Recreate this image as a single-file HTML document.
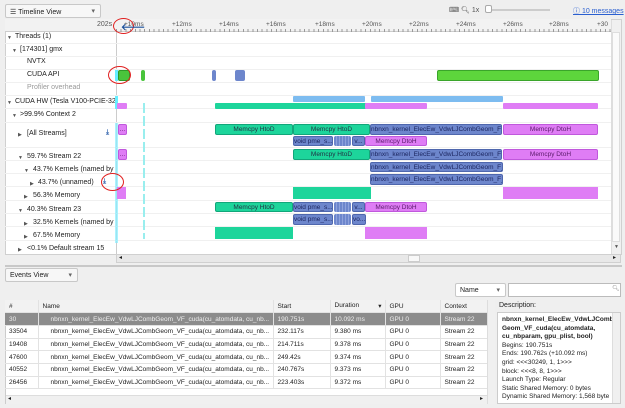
<!DOCTYPE html>
<html><head><meta charset="utf-8"><style>
*{margin:0;padding:0;box-sizing:border-box}
body{width:625px;height:408px;background:#efefef;font-family:"Liberation Sans",sans-serif;font-size:7px;color:#222;position:relative;overflow:hidden}
.a{position:absolute}
.dd{position:absolute;background:#f7f7f7;border:1px solid #c8c8c8;border-radius:2px;font-size:7px;padding:3px 4px}
.dd:after{content:"▾";position:absolute;right:5px;top:2px;color:#666;font-size:7px}
.lbl{position:absolute;font-size:7px;white-space:nowrap;color:#222}
.tri{position:absolute;font-size:5px;color:#555}
.b{position:absolute;border-radius:2px;font-size:6.5px;text-align:center;line-height:10px;white-space:nowrap;overflow:hidden;color:#234}
.g{background:#1dd59b;border:1px solid #12a67a}
.bl{background:#6d86cc;border:1px solid #4f67ad;color:#1c2660}
.p{background:#df7df5;border:1px solid #c058dc;color:#5a1a6a}
.st{background:repeating-linear-gradient(90deg,#6d86cc 0 2px,#8ea2dc 2px 3px)}
.row{position:absolute;left:5px;width:606px;height:1px;background:#f0f0f0}
.tk{position:absolute;top:21px;font-size:6.5px;color:#555}
table{border-collapse:collapse}
td{height:12.7px;font-size:6.5px;padding-left:4px;border-bottom:1px solid #e2e2e2;border-right:1px solid #e2e2e2;white-space:nowrap;overflow:hidden}
</style></head><body>
<div class="dd" style="left:5px;top:4px;width:96px;height:14px">☰ Timeline View</div>
<div class="a" style="left:449px;top:6px;font-size:7px;color:#555">⌨ 🔍︎ 1x</div>
<div class="a" style="left:485px;top:9px;width:65px;height:2px;background:#ccc"></div>
<div class="a" style="left:485px;top:5px;width:7px;height:8px;background:#fff;border:1px solid #aaa;border-radius:2px"></div>
<div class="a" style="left:573px;top:6px;font-size:7px;color:#2a5fd0;text-decoration:underline">ⓘ 10 messages</div>

<div class="a" style="left:5px;top:19px;width:617px;height:236px;background:#fff;border:1px solid #d0d0d0"></div>
<div class="a" style="left:5px;top:19px;width:606px;height:13px;background:#f2f2f2;border-bottom:1px solid #ccc"></div>
<div class="a" style="left:116px;top:29px;width:495px;height:3px;background:repeating-linear-gradient(90deg,#999 0 1px,transparent 1px 4.7px)"></div>
<div class="lbl" style="left:97px;top:21px;color:#555">202s</div>
<div class="tk" style="left:124px">+10ms</div><div class="tk" style="left:172px">+12ms</div><div class="tk" style="left:219px">+14ms</div><div class="tk" style="left:266px">+16ms</div><div class="tk" style="left:315px">+18ms</div><div class="tk" style="left:362px">+20ms</div><div class="tk" style="left:409px">+22ms</div><div class="tk" style="left:456px">+24ms</div><div class="tk" style="left:503px">+26ms</div><div class="tk" style="left:549px">+28ms</div><div class="tk" style="left:597px">+30</div>
<div class="a" style="left:116px;top:32px;width:1px;height:222px;background:#ccc"></div>
<div class="a" style="left:611px;top:20px;width:10px;height:234px;background:#f0f0f0;border-left:1px solid #ddd"></div>
<div class="a" style="left:612px;top:32px;width:8px;height:210px;background:#fafafa;border:1px solid #ddd"></div>
<div class="a" style="left:614px;top:244px;font-size:5px;color:#555">▼</div>
<div class="a" style="left:116px;top:254px;width:505px;height:9px;background:#e8e8e8;border:1px solid #d0d0d0"></div>
<div class="a" style="left:408px;top:255px;width:12px;height:7px;background:#f8f8f8;border:1px solid #ccc"></div>
<div class="a" style="left:119px;top:254px;font-size:6px">◂</div><div class="a" style="left:613px;top:254px;font-size:6px">▸</div>

<div class="row" style="top:43px"></div><div class="row" style="top:56px"></div><div class="row" style="top:69px"></div><div class="row" style="top:82px"></div><div class="row" style="top:95px"></div><div class="row" style="top:108px"></div><div class="row" style="top:122px"></div><div class="row" style="top:147px"></div><div class="row" style="top:160px"></div><div class="row" style="top:173px"></div><div class="row" style="top:186px"></div><div class="row" style="top:200px"></div><div class="row" style="top:213px"></div><div class="row" style="top:226px"></div><div class="row" style="top:240px"></div>

<div class="a" style="left:0;top:0;width:116px;height:255px;overflow:hidden">
<div class="tri" style="left:7px;top:35px">▼</div><div class="lbl" style="left:15px;top:33px">Threads (1)</div>
<div class="tri" style="left:12px;top:48px">▼</div><div class="lbl" style="left:20px;top:46px">[174301] gmx</div>
<div class="lbl" style="left:27px;top:58px">NVTX</div>
<div class="lbl" style="left:27px;top:71px">CUDA API</div>
<div class="lbl" style="left:27px;top:84px;color:#999">Profiler overhead</div>
<div class="tri" style="left:7px;top:100px">▼</div><div class="lbl" style="left:15px;top:98px">CUDA HW (Tesla V100-PCIE-32GE</div>
<div class="tri" style="left:12px;top:113px">▼</div><div class="lbl" style="left:20px;top:111px">&gt;99.9% Context 2</div>
<div class="tri" style="left:18px;top:132px">▶</div><div class="lbl" style="left:27px;top:130px">[All Streams]</div><div class="lbl" style="left:106px;top:129px;color:#3a6ab0;font-weight:bold">⤓</div>
<div class="tri" style="left:18px;top:155px">▼</div><div class="lbl" style="left:27px;top:153px">59.7% Stream 22</div>
<div class="tri" style="left:24px;top:168px">▼</div><div class="lbl" style="left:33px;top:166px">43.7% Kernels (named by N</div>
<div class="tri" style="left:30px;top:181px">▶</div><div class="lbl" style="left:38px;top:179px">43.7% (unnamed)</div><div class="lbl" style="left:103px;top:178px;color:#3a6ab0;font-weight:bold">⤓</div>
<div class="tri" style="left:24px;top:194px">▶</div><div class="lbl" style="left:33px;top:192px">56.3% Memory</div>
<div class="tri" style="left:18px;top:208px">▼</div><div class="lbl" style="left:27px;top:206px">40.3% Stream 23</div>
<div class="tri" style="left:24px;top:221px">▶</div><div class="lbl" style="left:33px;top:219px">32.5% Kernels (named by NV</div>
<div class="tri" style="left:24px;top:234px">▶</div><div class="lbl" style="left:33px;top:232px">67.5% Memory</div>
<div class="tri" style="left:18px;top:247px">▶</div><div class="lbl" style="left:27px;top:245px">&lt;0.1% Default stream 15</div>
</div>

<div class="a" style="left:115px;top:70px;width:3px;height:11px;background:#6ef"></div>
<div class="a" style="left:115px;top:96px;width:3px;height:13px;background:#6ef"></div>
<div class="a" style="left:115px;top:123px;width:3px;height:120px;background:#8ef;opacity:.7"></div>
<div class="a" style="left:143px;top:103px;width:2px;height:136px;background:repeating-linear-gradient(#9ee 0 10px,transparent 10px 13px)"></div>

<div class="b" style="left:118px;top:70px;width:12px;height:11px;background:#49c43c;border:1px solid #2f9a28"></div>
<div class="b" style="left:141px;top:70px;width:4px;height:11px;background:#49c43c"></div>
<div class="b" style="left:212px;top:70px;width:4px;height:11px;background:#6d86cc"></div>
<div class="b" style="left:235px;top:70px;width:10px;height:11px;background:#6d86cc"></div>
<div class="b" style="left:437px;top:70px;width:162px;height:11px;background:#5dd53c;border:1px solid #3aa52a"></div>
<div class="b" style="left:293px;top:96px;width:72px;height:6px;background:#7dbcf0;border-radius:1px"></div>
<div class="b" style="left:371px;top:96px;width:132px;height:6px;background:#7dbcf0;border-radius:1px"></div>
<div class="b" style="left:215px;top:103px;width:155px;height:6px;background:#1dd59b;border-radius:1px"></div>
<div class="b" style="left:117px;top:103px;width:10px;height:6px;background:#df7df5;border-radius:1px"></div>
<div class="b" style="left:365px;top:103px;width:62px;height:6px;background:#df7df5;border-radius:1px"></div>
<div class="b" style="left:503px;top:103px;width:95px;height:6px;background:#df7df5;border-radius:1px"></div>
<div class="b p" style="left:118px;top:124px;width:9px;height:11px">...</div>
<div class="b g" style="left:215px;top:124px;width:78px;height:11px">Memcpy HtoD</div>
<div class="b g" style="left:293px;top:124px;width:77px;height:11px">Memcpy HtoD</div>
<div class="b bl" style="left:370px;top:124px;width:132px;height:11px">nbnxn_kernel_ElecEw_VdwLJCombGeom_F_...</div>
<div class="b p" style="left:503px;top:124px;width:95px;height:11px">Memcpy DtoH</div>
<div class="b bl" style="left:293px;top:136px;width:40px;height:10px">void pme_s...</div>
<div class="b st" style="left:334px;top:136px;width:17px;height:10px"></div>
<div class="b bl" style="left:352px;top:136px;width:13px;height:10px">v...</div>
<div class="b p" style="left:365px;top:136px;width:62px;height:10px">Memcpy DtoH</div>
<div class="b p" style="left:118px;top:149px;width:9px;height:11px">...</div>
<div class="b g" style="left:293px;top:149px;width:77px;height:11px">Memcpy HtoD</div>
<div class="b bl" style="left:370px;top:149px;width:132px;height:11px">nbnxn_kernel_ElecEw_VdwLJCombGeom_F_...</div>
<div class="b p" style="left:503px;top:149px;width:95px;height:11px">Memcpy DtoH</div>
<div class="b bl" style="left:370px;top:162px;width:133px;height:10px">nbnxn_kernel_ElecEw_VdwLJCombGeom_F_...</div>
<div class="b bl" style="left:370px;top:174px;width:133px;height:11px">nbnxn_kernel_ElecEw_VdwLJCombGeom_F_...</div>
<div class="b" style="left:117px;top:187px;width:9px;height:12px;background:#df7df5;border-radius:0"></div>
<div class="b" style="left:293px;top:187px;width:78px;height:12px;background:#1dd59b;border-radius:0"></div>
<div class="b" style="left:503px;top:187px;width:95px;height:12px;background:#df7df5;border-radius:0"></div>
<div class="b g" style="left:215px;top:202px;width:78px;height:10px">Memcpy HtoD</div>
<div class="b bl" style="left:293px;top:202px;width:40px;height:10px">void pme_s...</div>
<div class="b st" style="left:334px;top:202px;width:17px;height:10px"></div>
<div class="b bl" style="left:352px;top:202px;width:13px;height:10px">v...</div>
<div class="b p" style="left:365px;top:202px;width:62px;height:10px">Memcpy DtoH</div>
<div class="b bl" style="left:293px;top:214px;width:40px;height:11px">void pme_s...</div>
<div class="b st" style="left:334px;top:214px;width:17px;height:11px"></div>
<div class="b bl" style="left:352px;top:214px;width:14px;height:11px">vo...</div>
<div class="b" style="left:215px;top:227px;width:78px;height:12px;background:#1dd59b;border-radius:0"></div>
<div class="b" style="left:365px;top:227px;width:62px;height:12px;background:#df7df5;border-radius:0"></div>

<div class="a" style="left:113px;top:18px;width:21px;height:16px;border:1.5px solid #e02020;border-radius:50%"></div>
<div class="a" style="left:121px;top:22px;font-size:9px;color:#1a4f9a;font-weight:bold">🡐</div>
<div class="a" style="left:108px;top:66px;width:23px;height:18px;border:1.5px solid #e02020;border-radius:50%"></div>
<div class="a" style="left:101px;top:173px;width:23px;height:18px;border:1.5px solid #e02020;border-radius:50%"></div>

<div class="a" style="left:5px;top:265px;width:617px;height:2px;background:#c8c8c8"></div>

<div class="dd" style="left:5px;top:268px;width:73px;height:14px">Events View</div>
<div class="dd" style="left:455px;top:283px;width:51px;height:14px;background:#fff">Name</div>
<div class="a" style="left:508px;top:283px;width:113px;height:14px;background:#fff;border:1px solid #bbb"></div>
<div class="a" style="left:612px;top:285px;font-size:6px;color:#999">🔍︎</div>

<div class="a" style="left:5px;top:300px;width:490px;height:104px;background:#fff;border:1px solid #ccc"></div>
<table class="a" style="left:5px;top:300px;width:482px;table-layout:fixed">
<colgroup><col style="width:33px"><col style="width:235px"><col style="width:57px"><col style="width:55px"><col style="width:55px"><col style="width:47px"></colgroup>
<tr style="background:#f2f2f2"><td style="height:12px">#</td><td>Name</td><td>Start</td><td>Duration <span style="float:right;padding-right:3px">▾</span></td><td>GPU</td><td>Context</td></tr>
<tr style="background:#8c8c8c;color:#eee"><td>30</td><td style="padding-left:12px">nbnxn_kernel_ElecEw_VdwLJCombGeom_VF_cuda(cu_atomdata, cu_nb...</td><td>190.751s</td><td>10.092 ms</td><td>GPU 0</td><td>Stream 22</td></tr>
<tr><td>33504</td><td style="padding-left:12px">nbnxn_kernel_ElecEw_VdwLJCombGeom_VF_cuda(cu_atomdata, cu_nb...</td><td>232.117s</td><td>9.380 ms</td><td>GPU 0</td><td>Stream 22</td></tr>
<tr><td>19408</td><td style="padding-left:12px">nbnxn_kernel_ElecEw_VdwLJCombGeom_VF_cuda(cu_atomdata, cu_nb...</td><td>214.711s</td><td>9.378 ms</td><td>GPU 0</td><td>Stream 22</td></tr>
<tr><td>47600</td><td style="padding-left:12px">nbnxn_kernel_ElecEw_VdwLJCombGeom_VF_cuda(cu_atomdata, cu_nb...</td><td>249.42s</td><td>9.374 ms</td><td>GPU 0</td><td>Stream 22</td></tr>
<tr><td>40552</td><td style="padding-left:12px">nbnxn_kernel_ElecEw_VdwLJCombGeom_VF_cuda(cu_atomdata, cu_nb...</td><td>240.767s</td><td>9.373 ms</td><td>GPU 0</td><td>Stream 22</td></tr>
<tr><td>26456</td><td style="padding-left:12px">nbnxn_kernel_ElecEw_VdwLJCombGeom_VF_cuda(cu_atomdata, cu_nb...</td><td>223.403s</td><td>9.372 ms</td><td>GPU 0</td><td>Stream 22</td></tr>
</table>
<div class="a" style="left:487px;top:300px;width:8px;height:104px;background:#f0f0f0;border-left:1px solid #ddd"></div>
<div class="a" style="left:6px;top:395px;width:481px;height:9px;background:#f0f0f0;border-top:1px solid #ddd"></div>
<div class="a" style="left:8px;top:395px;font-size:6px">◂</div><div class="a" style="left:480px;top:395px;font-size:6px">▸</div>

<div class="lbl" style="left:499px;top:302px">Description:</div>
<div class="a" style="left:497px;top:312px;width:124px;height:92px;background:#fff;border:1px solid #ccc;padding:3px 11px 0 4px;font-size:6.5px;line-height:8.6px;white-space:nowrap;overflow:hidden">
<b>nbnxn_kernel_ElecEw_VdwLJComb<br>Geom_VF_cuda(cu_atomdata,<br>cu_nbparam, gpu_plist, bool)</b><br>Begins: 190.751s<br>Ends: 190.762s (+10.092 ms)<br>grid: &lt;&lt;&lt;30249, 1, 1&gt;&gt;&gt;<br>block: &lt;&lt;&lt;8, 8, 1&gt;&gt;&gt;<br>Launch Type: Regular<br>Static Shared Memory: 0 bytes<br>Dynamic Shared Memory: 1,568 byte</div>
<div class="a" style="left:612px;top:313px;width:8px;height:90px;background:#f0f0f0;border-left:1px solid #ddd"></div>
</body></html>
